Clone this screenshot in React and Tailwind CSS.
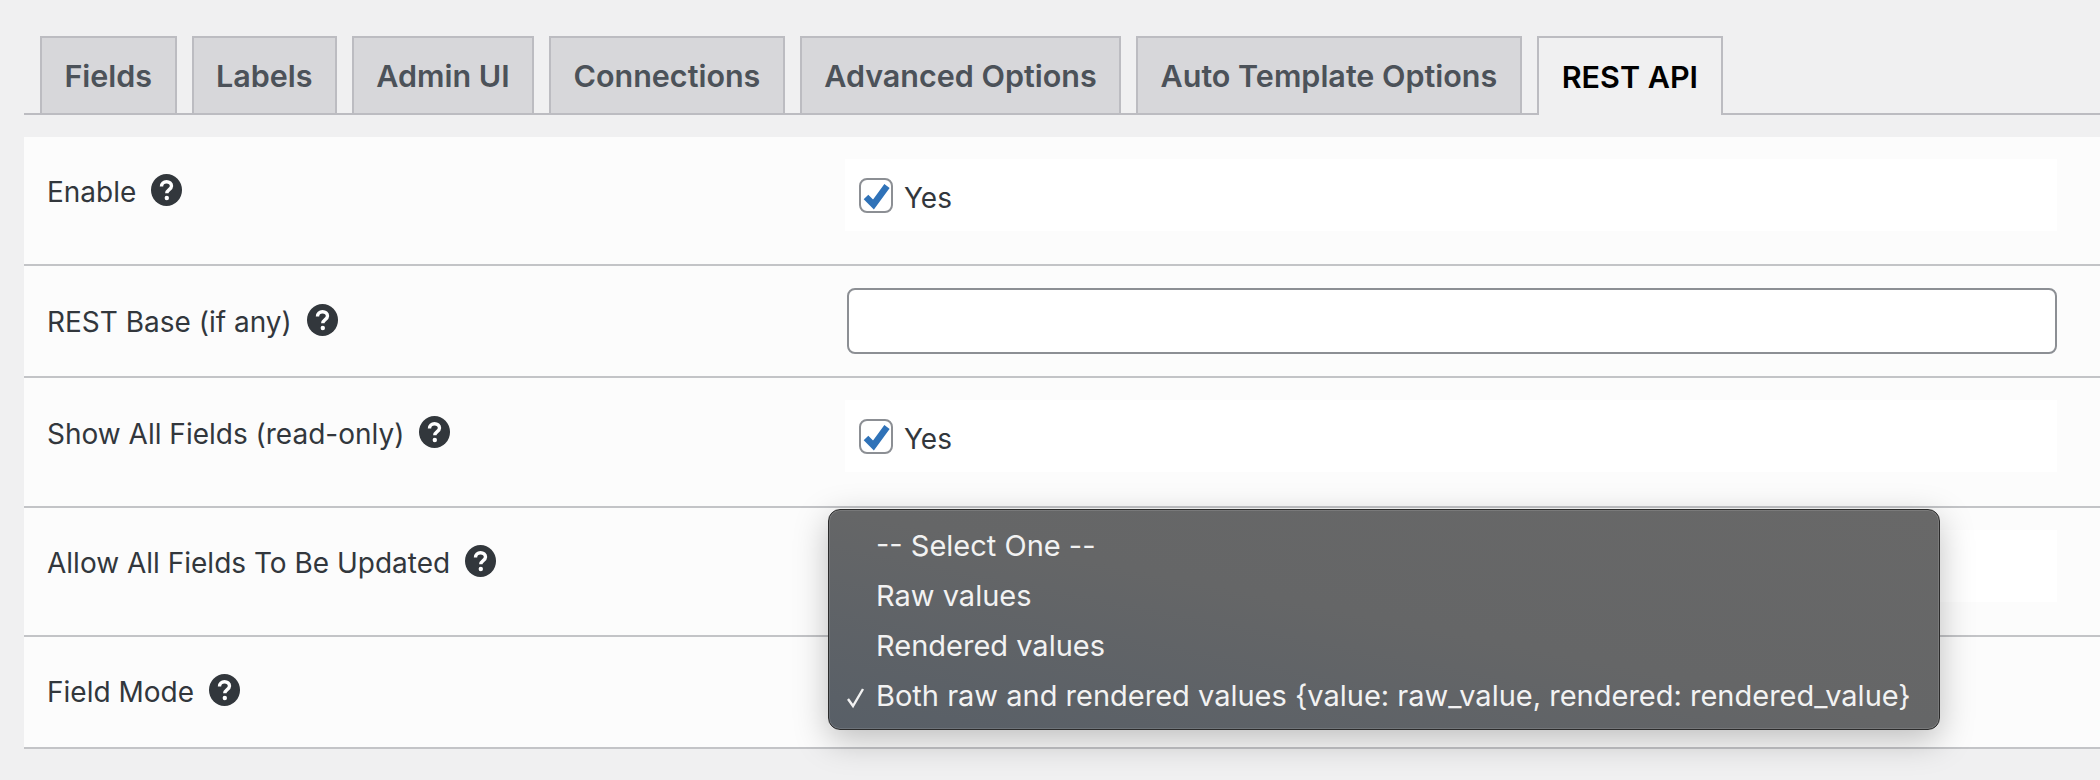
import React from 'react';

const tabs = ['Fields', 'Labels', 'Admin UI', 'Connections', 'Advanced Options', 'Auto Template Options'];

const options = ['-- Select One --', 'Raw values', 'Rendered values', 'Both raw and rendered values {value: raw_value, rendered: rendered_value}'];

const HelpIcon = () => (
    <svg width="31" height="32" viewBox="0 0 31 32" className="shrink-0 mt-[2px]">
        <ellipse cx="15.5" cy="16" rx="15.5" ry="16" fill="#32373c" />
        <path d="M10.5 12.5c0-3 2.2-4.7 5-4.7s5 1.6 5 4.2c0 3.6-4.7 3.6-4.7 7.2" fill="none" stroke="#fff" strokeWidth="3.4" />
        <circle cx="15.8" cy="24" r="2.2" fill="#fff" />
    </svg>
);

const YesCheck = () => (
    <div className="flex items-center h-[72px] bg-white pl-[14px]">
        <span className="flex items-center justify-center w-[34px] h-[35px] rounded-[8px] border-2 border-[#8c8f94] bg-white">
            <svg width="30" height="30" viewBox="0 0 30 30">
                <path d="M5 17l7.5 7.5L26 6" fill="none" stroke="#2f72b8" strokeWidth="6.5" />
            </svg>
        </span>
        <span className="ml-[11px] mt-[5px] text-[28px] leading-none text-[#32373c]">Yes</span>
    </div>
);

const Row = ({ label, height, top, children }) => (
    <div className={`flex border-b-2 border-[#c3c4c7] ${height}`}>
        <div className={`flex items-start gap-[15px] w-[821px] pl-[23px] ${top}`}>
            <span className="text-[28px] leading-[40px] text-[#32373c]">{label}</span>
            <HelpIcon />
        </div>
        <div className="flex-1 mr-[43px]">{children}</div>
    </div>
);

const App = () => {
    return (
        <div className="relative h-[780px] overflow-hidden bg-[#f0f0f1] pt-[36px] pl-[24px] font-['Inter',sans-serif]">
            <div className="flex gap-[15px] pl-[16px] h-[79px] border-b-2 border-[#bcbcc1]">
                {tabs.map((tab) => (
                    <div key={tab} className="flex items-center justify-center h-[79px] px-[22.4px] border-2 border-[#bcbcc1] bg-[#d7d7da] text-[30.5px] font-semibold text-[#4c5259]">
                        {tab}
                    </div>
                ))}
                <div className="flex items-center justify-center h-[79px] px-[23px] border-2 border-b-0 border-[#bcbcc1] bg-[#f0f0f1] text-[30.5px] font-semibold text-black">
                    REST API
                </div>
            </div>

            <div className="mt-[22px] bg-[#fcfcfc]">
                <Row label="Enable" height="h-[129px]" top="pt-[35px]">
                    <div className="pt-[22px]"><YesCheck /></div>
                </Row>
                <Row label="REST Base (if any)" height="h-[112px]" top="pt-[36px]">
                    <div className="pt-[22px]">
                        <div className="h-[66px] ml-[2px] rounded-[8px] border-2 border-[#8c8f94] bg-white"></div>
                    </div>
                </Row>
                <Row label="Show All Fields (read-only)" height="h-[130px]" top="pt-[36px]">
                    <div className="pt-[22px]"><YesCheck /></div>
                </Row>
                <Row label="Allow All Fields To Be Updated" height="h-[129px]" top="pt-[35px]">
                    <div className="pt-[22px]"><div className="h-[72px] bg-white"></div></div>
                </Row>
                <Row label="Field Mode" height="h-[112px]" top="pt-[35px]" />
            </div>

            {/* native select menu opened over the last rows */}
            <div className="absolute left-[828px] top-[509px] w-[1112px] h-[221px] rounded-[12px] border border-[#2b2b2b] bg-linear-to-tr from-[#585f67] via-[#656667] to-[#686868] pt-[12px] shadow-[0_10px_34px_rgba(0,0,0,0.25),inset_0_0_0_1px_rgba(255,255,255,0.12)]">
                {options.map((option, i) => (
                    <div key={option} className="relative h-[50px] pl-[47px] text-[29px] leading-[48px] whitespace-nowrap text-[#f2f2f2]">
                        {i === 3 && (
                            <svg width="20" height="22" viewBox="0 0 20 22" className="absolute left-[17px] top-[15px]">
                                <path d="M2 12l5 7L17 2" fill="none" stroke="#f2f2f2" strokeWidth="2.4" />
                            </svg>
                        )}
                        {option}
                    </div>
                ))}
            </div>
        </div>
    );
};

export default App;
